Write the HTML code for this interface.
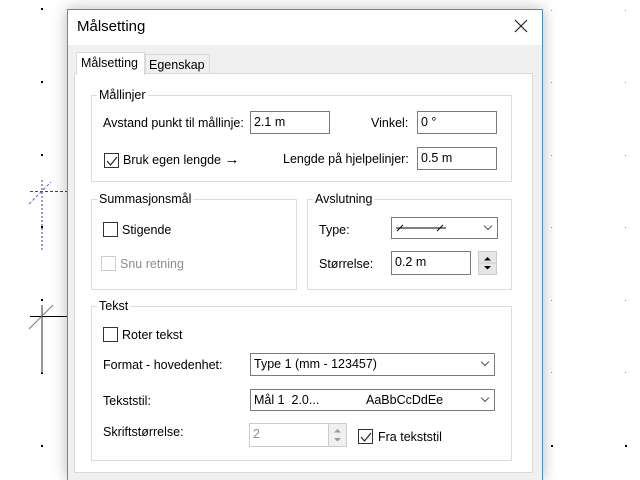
<!DOCTYPE html>
<html><head><style>
*{box-sizing:border-box;margin:0;padding:0}
html,body{width:640px;height:480px;overflow:hidden}
body{background:#fff;position:relative;font-family:"Liberation Sans",sans-serif;font-size:12.5px;color:#000}
.a{position:absolute}
.dot{position:absolute;width:2px;height:2px;background:#000}
.sdot{position:absolute;width:1px;height:1px;background:#999}
.dlg{left:67px;top:9px;width:476px;height:471px;background:#f0f0f0;border:1px solid #4a90d0;border-bottom:none;box-shadow:0 0 14px rgba(0,0,0,.28)}
.gb{position:absolute;border:1px solid #dcdcdc}
.gl{position:absolute;background:#fff;padding:0 2px;top:-8px;left:5px;line-height:14px}
.in{position:absolute;border:1px solid #7a7a7a;background:#fff;padding:2px 3px;line-height:17px}
.cb{position:absolute;width:15px;height:15px;border:1px solid #333;background:#fff}
.chev{position:absolute;right:6px;top:7px;width:6px;height:6px;border-right:1px solid #555;border-bottom:1px solid #555;transform:rotate(45deg)}
.spin{position:absolute;width:19px;background:#e6e6e6;border:1px solid #ccc}
</style></head><body>
<div class="dot" style="left:41px;top:8px"></div>
<div class="dot" style="left:41px;top:81px"></div>
<div class="dot" style="left:41px;top:154px"></div>
<div class="dot" style="left:41px;top:226px"></div>
<div class="dot" style="left:41px;top:299px"></div>
<div class="dot" style="left:41px;top:372px"></div>
<div class="dot" style="left:41px;top:445px"></div>
<div class="sdot" style="left:551px;top:10px"></div><div class="sdot" style="left:625px;top:10px"></div>
<div class="sdot" style="left:551px;top:82px"></div><div class="sdot" style="left:625px;top:82px"></div>
<div class="sdot" style="left:551px;top:155px"></div><div class="sdot" style="left:625px;top:155px"></div>
<div class="sdot" style="left:551px;top:227px"></div><div class="sdot" style="left:625px;top:227px"></div>
<div class="sdot" style="left:551px;top:300px"></div><div class="sdot" style="left:625px;top:300px"></div>
<div class="sdot" style="left:551px;top:372px"></div><div class="sdot" style="left:625px;top:372px"></div>
<div class="dot" style="left:551px;top:445px"></div><div class="dot" style="left:625px;top:445px"></div>
<svg class="a" style="left:0;top:0" width="70" height="480">
<line x1="30" y1="191.5" x2="67" y2="191.5" stroke="#3a3aa0" stroke-dasharray="3,2"/>
<line x1="42" y1="180" x2="42" y2="252" stroke="#3a3aa0" stroke-dasharray="2,2"/>
<line x1="29" y1="204" x2="51" y2="182" stroke="#6060c0" stroke-dasharray="3,2"/>
<line x1="42" y1="305" x2="42" y2="373" stroke="#777" stroke-width="1.5"/>
<line x1="30" y1="316.5" x2="67" y2="316.5" stroke="#000"/>
<line x1="29" y1="329" x2="53" y2="305" stroke="#777"/>
</svg>
<div class="a dlg">
 <div class="a" style="left:0;top:0;width:474px;height:35px;background:#fff"></div>
 <div class="a" style="left:9px;top:8px;font-size:15px">Målsetting</div>
 <svg class="a" style="left:446px;top:9px" width="14" height="14"><path d="M1 1L13 13M13 1L1 13" stroke="#222" stroke-width="1.2"/></svg>
 <div class="a" style="left:6px;top:63px;width:459px;height:400px;background:#fff;border:1px solid #dadada"></div>
 <div class="a" style="left:77px;top:44px;width:65px;height:20px;border:1px solid #dadada;background:#f0f0f0;padding:3px 3px">Egenskap</div>
 <div class="a" style="left:8px;top:42px;width:69px;height:23px;border:1px solid #dadada;border-bottom:none;background:#fff;padding:3px 4px">Målsetting</div>
</div>
<div class="gb" style="left:91px;top:95px;width:421px;height:87px"><span class="gl">Mållinjer</span></div>
<div class="a" style="left:103px;top:116px">Avstand punkt til mållinje:</div>
<div class="in" style="left:250px;top:111px;width:80px;height:23px">2.1 m</div>
<div class="a" style="left:371px;top:116px">Vinkel:</div>
<div class="in" style="left:417px;top:111px;width:80px;height:23px">0 °</div>
<div class="cb" style="left:104px;top:153px"></div>
<svg class="a" style="left:105px;top:154px" width="14" height="14"><path d="M2 7L5.5 11L12 3" stroke="#222" fill="none" stroke-width="1.2"/></svg>
<div class="a" style="left:123px;top:153px">Bruk egen lengde <span style="font-size:15px;line-height:12px">→</span></div>
<div class="a" style="left:283px;top:152px">Lengde på hjelpelinjer:</div>
<div class="in" style="left:417px;top:147px;width:80px;height:23px">0.5 m</div>

<div class="gb" style="left:91px;top:199px;width:206px;height:91px"><span class="gl">Summasjonsmål</span></div>
<div class="cb" style="left:103px;top:222px"></div>
<div class="a" style="left:122px;top:223px">Stigende</div>
<div class="cb" style="left:101px;top:256px;border-color:#ccc"></div>
<div class="a" style="left:120px;top:257px;color:#8d8d8d">Snu retning</div>

<div class="gb" style="left:307px;top:199px;width:205px;height:91px"><span class="gl">Avslutning</span></div>
<div class="a" style="left:319px;top:223px">Type:</div>
<div class="in" style="left:391px;top:217px;width:107px;height:22px"><svg class="a" style="left:2px;top:4px" width="55" height="12"><line x1="2" y1="6" x2="52" y2="6" stroke="#000"/><line x1="3" y1="9" x2="9" y2="3" stroke="#000"/><line x1="43" y1="9" x2="49" y2="3" stroke="#000"/></svg><span class="chev" style="top:5px"></span></div>
<div class="a" style="left:319px;top:257px">Størrelse:</div>
<div class="in" style="left:391px;top:251px;width:80px;height:24px">0.2 m</div>
<div class="spin" style="left:478px;top:251px;height:24px"><svg width="17" height="22"><path d="M5 8.5L8.5 5L12 8.5Z M5 14L8.5 17.5L12 14Z" fill="#000"/><line x1="0" y1="11" x2="17" y2="11" stroke="#ccc"/></svg></div>

<div class="gb" style="left:91px;top:306px;width:421px;height:155px"><span class="gl">Tekst</span></div>
<div class="cb" style="left:103px;top:327px"></div>
<div class="a" style="left:122px;top:328px">Roter tekst</div>
<div class="a" style="left:103px;top:358px">Format - hovedenhet:</div>
<div class="in" style="left:250px;top:353px;width:245px;height:23px">Type 1 (mm - 123457)<span class="chev" style="top:5px"></span></div>
<div class="a" style="left:103px;top:394px">Tekststil:</div>
<div class="in" style="left:250px;top:389px;width:245px;height:22px">Mål 1&nbsp; 2.0...<span class="a" style="left:115px;top:2px">AaBbCcDdEe</span><span class="chev" style="top:5px"></span></div>
<div class="a" style="left:103px;top:425px">Skriftstørrelse:</div>
<div class="in" style="left:249px;top:423px;width:80px;height:24px;border-color:#ccc;color:#8d8d8d">2</div>
<div class="spin" style="left:328px;top:423px;height:24px;background:#f0f0f0"><svg width="17" height="22"><path d="M5 8.5L8.5 5L12 8.5Z M5 14L8.5 17.5L12 14Z" fill="#999"/></svg></div>
<div class="cb" style="left:358px;top:429px"></div>
<svg class="a" style="left:359px;top:430px" width="14" height="14"><path d="M2 7L5.5 11L12 3" stroke="#222" fill="none" stroke-width="1.2"/></svg>
<div class="a" style="left:378px;top:430px">Fra tekststil</div>
</body></html>
